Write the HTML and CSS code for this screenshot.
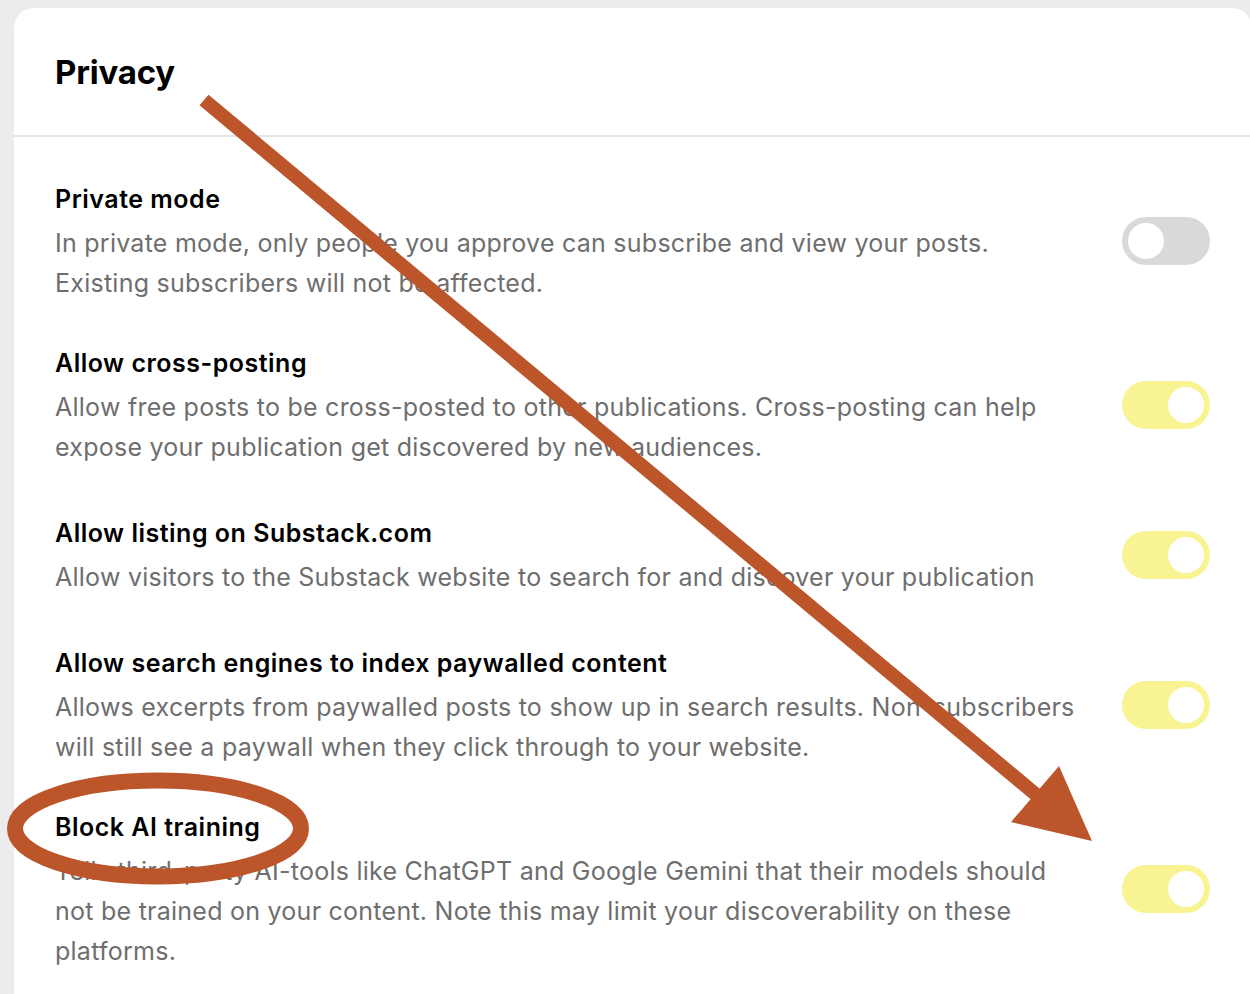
FILE: index.html
```html
<!DOCTYPE html>
<html lang="en">
<head>
<meta charset="utf-8">
<title>Privacy</title>
<link rel="stylesheet" href="styles.css">
</head>
<body>
<div class="card">
  <header class="card-header">
    <h1 class="card-title">Privacy</h1>
  </header>
  <div class="settings">
    <div class="row">
      <div class="row-text">
        <div class="row-title">Private mode</div>
        <div class="row-desc">In private mode, only people you approve can subscribe and view your posts. Existing subscribers will not be affected.</div>
      </div>
      <span class="toggle"><span class="knob"></span></span>
    </div>
    <div class="row row--spaced">
      <div class="row-text">
        <div class="row-title">Allow cross-posting</div>
        <div class="row-desc">Allow free posts to be cross-posted to other publications. Cross-posting can help expose your publication get discovered by new audiences.</div>
      </div>
      <span class="toggle toggle--on"><span class="knob"></span></span>
    </div>
    <div class="row row--spaced">
      <div class="row-text">
        <div class="row-title">Allow listing on Substack.com</div>
        <div class="row-desc">Allow visitors to the Substack website to search for and discover your publication</div>
      </div>
      <span class="toggle toggle--on"><span class="knob"></span></span>
    </div>
    <div class="row">
      <div class="row-text">
        <div class="row-title">Allow search engines to index paywalled content</div>
        <div class="row-desc">Allows excerpts from paywalled posts to show up in search results. Non-subscribers will still see a paywall when they click through to your website.</div>
      </div>
      <span class="toggle toggle--on"><span class="knob"></span></span>
    </div>
    <div class="row">
      <div class="row-text">
        <div class="row-title">Block AI training</div>
        <div class="row-desc">Tells third-party AI-tools like ChatGPT and Google Gemini that their models should not be trained on your content. Note this may limit your discoverability on these platforms.</div>
      </div>
      <span class="toggle toggle--on"><span class="knob"></span></span>
    </div>
  </div>
</div>
<svg class="annotation" width="1250" height="994" viewBox="0 0 1250 994" xmlns="http://www.w3.org/2000/svg">
  <line x1="204" y1="100" x2="1040" y2="798" stroke="#bd552b" stroke-width="14"/>
  <polygon points="1011,822 1059,766 1092,841" fill="#bd552b"/>
  <ellipse cx="158" cy="828.5" rx="143" ry="48" fill="none" stroke="#bd552b" stroke-width="16"/>
</svg>
</body>
</html>
```
FILE: styles.css
```css
html, body {
  margin: 0;
  padding: 0;
  overflow: hidden;
}
body {
  background: #ececec;
  font-family: Inter, "Noto Sans", "DejaVu Sans", sans-serif;
  width: 1250px;
  height: 994px;
  position: relative;
}
.card {
  margin: 8px 0 0 14px;
  width: 1238px;
  min-height: 1100px;
  background: #ffffff;
  border-radius: 20px 20px 0 0;
  box-sizing: border-box;
}
.card-header {
  height: 127px;
  display: flex;
  align-items: center;
  padding-left: 41px;
  border-bottom: 2px solid #e4e4e4;
}
.card-title {
  margin: 0;
  font-size: 33px;
  font-weight: 700;
  color: #000;
  letter-spacing: -0.2px;
}
.settings {
  padding: 46px 42px 0 41px;
}
.row {
  display: flex;
  align-items: center;
  gap: 42px;
  margin-bottom: 44px;
}
.row--spaced {
  margin-bottom: 50px;
}
.row-text {
  flex: 1;
  min-width: 0;
}
.row-title {
  font-size: 25px;
  line-height: 32px;
  font-weight: 600;
  color: #000;
  letter-spacing: 0.5px;
  margin-bottom: 8px;
}
.row-desc {
  font-size: 25px;
  line-height: 40px;
  color: #6e6e6e;
  letter-spacing: 0.25px;
}
.toggle {
  flex: none;
  width: 88px;
  height: 48px;
  border-radius: 24px;
  background: #d9d9d9;
  display: flex;
  align-items: center;
  padding: 0 6px;
  box-sizing: border-box;
  margin-top: -4px;
}
.toggle--on {
  background: #f8f493;
  justify-content: flex-end;
}
.knob {
  width: 36px;
  height: 36px;
  border-radius: 50%;
  background: #ffffff;
}
.annotation {
  position: absolute;
  left: 0;
  top: 0;
  pointer-events: none;
}
```
